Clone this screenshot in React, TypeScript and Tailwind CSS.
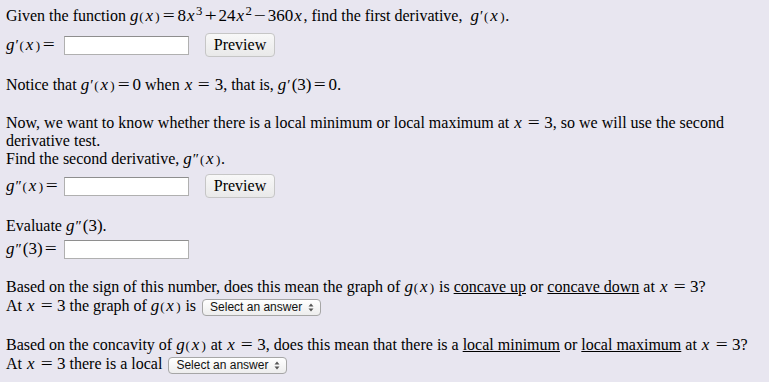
import React from "react";

const X = () => <span className="italic pl-[1px] pr-[1.5px]">x</span>;

const Op = ({ s, w = "w-[17px]" }: { s: string; w?: string }) => (
  <span className={`inline-block ${w} text-center`}>
    <span className="inline-block scale-x-[1.25]">{s}</span>
  </span>
);

function G({ p = "", arg = "x" }: { p?: string; arg?: string }) {
  return (
    <span className="whitespace-nowrap">
      <span className="italic">g</span>
      {p && <span className="text-[15px] pl-[1px]">{p}</span>}
      {arg === "x" ? (
        <>
          <span className="inline-block w-[6px] text-center text-[13px]">(</span>
          <X />
          <span className="inline-block w-[6px] text-center text-[13px]">)</span>
        </>
      ) : (
        <>
          <span className="pl-[1px]">(</span>
          {arg})
        </>
      )}
    </span>
  );
}

const M = ({ children }: { children: React.ReactNode }) => (
  <span className="text-[17px] whitespace-nowrap">{children}</span>
);

const X3 = () => (
  <M>
    <X />
    <Op s="=" w="w-[21px]" />3
  </M>
);

function Input() {
  return (
    <span className="inline-block w-[125px] h-[19px] bg-white border border-[#b0b0b0] border-t-[#8e8e8e]" />
  );
}

function Preview() {
  return (
    <button className="ml-[16px] w-[70px] h-[24px] rounded-[4px] border border-[#c6c6c6] bg-linear-to-b from-[#f8f8f8] to-[#e9e9e9] text-[16px] leading-none text-black font-['Liberation_Serif',serif]">
      Preview
    </button>
  );
}

function Select({ ml = "ml-[6px]" }: { ml?: string }) {
  return (
    <span
      className={`${ml} inline-flex h-[17px] w-[119px] items-center justify-between rounded-[4px] border border-[#a6a6a6] bg-linear-to-b from-white to-[#ededed] pl-[7px] pr-[6px] align-middle font-['Liberation_Sans',sans-serif] text-[12px] leading-none text-[#111]`}
    >
      Select an answer
      <svg width="6" height="9" viewBox="0 0 6 9">
        <path d="M0.5 3.5 L3 0.5 L5.5 3.5Z" fill="#555" />
        <path d="M0.5 5.5 L3 8.5 L5.5 5.5Z" fill="#555" />
      </svg>
    </span>
  );
}

function Label({ p, arg = "x" }: { p: string; arg?: string }) {
  return (
    <span className="w-[58px] shrink-0 whitespace-nowrap">
      <M>
        <G p={p} arg={arg} />
        <Op s="=" w="w-[16px]" />
      </M>
    </span>
  );
}

export default function App() {
  return (
    <div className="w-[769px] h-[382px] overflow-hidden bg-[#e8e6f0] pl-[6px] pt-[7px] font-['Liberation_Serif',serif] text-[16px] leading-[18px] text-black">
      <div className="h-[18px] whitespace-nowrap">
        Given the function{" "}
        <M>
          <G />
          <Op s="=" />8<X />
          <sup>3</sup>
          <Op s="+" w="w-[16px]" />24<X />
          <sup>2</sup>
          <Op s="−" w="w-[16px]" />360<X />
        </M>
        , find the first derivative,{" "}
        <M>
          <span className="ml-[4px]" />
          <G p="′" />
        </M>
        .
      </div>

      <div className="mt-[8px] flex h-[24px] items-center">
        <Label p="′" />
        <Input />
        <Preview />
      </div>

      <div className="mt-[19px] h-[18px] whitespace-nowrap">
        Notice that{" "}
        <M>
          <G p="′" />
          <Op s="=" />0
        </M>{" "}
        when <X3 />, that is,{" "}
        <M>
          <G p="′" arg="3" />
          <Op s="=" />0.
        </M>
      </div>

      <div className="mt-[20px] pr-[8px]">
        Now, we want to know whether there is a local minimum or local maximum at <X3 />, so we will use the second
        derivative test.
        <br />
        Find the second derivative,{" "}
        <M>
          <G p="″" />
        </M>
        .
      </div>

      <div className="mt-[5px] flex h-[24px] items-center">
        <Label p="″" />
        <Input />
        <Preview />
      </div>

      <div className="mt-[19px] h-[18px] whitespace-nowrap">
        Evaluate{" "}
        <M>
          <G p="″" arg="3" />
        </M>
        .
      </div>

      <div className="mt-[3px] flex h-[22px] items-center">
        <Label p="″" arg="3" />
        <Input />
      </div>

      <div className="mt-[18px] h-[18px] whitespace-nowrap">
        Based on the sign of this number, does this mean the graph of{" "}
        <M>
          <G />
        </M>{" "}
        is <span className="underline">concave up</span> or <span className="underline">concave down</span> at{" "}
        <X3 />?
      </div>
      <div className="mt-[1px] h-[19px] whitespace-nowrap">
        At <X3 /> the graph of{" "}
        <M>
          <G />
        </M>{" "}
        is
        <Select />
      </div>

      <div className="mt-[20px] h-[18px] whitespace-nowrap">
        Based on the concavity of{" "}
        <M>
          <G />
        </M>{" "}
        at <X3 />, does this mean that there is a <span className="underline">local minimum</span> or{" "}
        <span className="underline">local maximum</span> at <X3 />?
      </div>
      <div className="mt-[1px] h-[19px] whitespace-nowrap">
        At <X3 /> there is a local
        <Select />
      </div>
    </div>
  );
}
